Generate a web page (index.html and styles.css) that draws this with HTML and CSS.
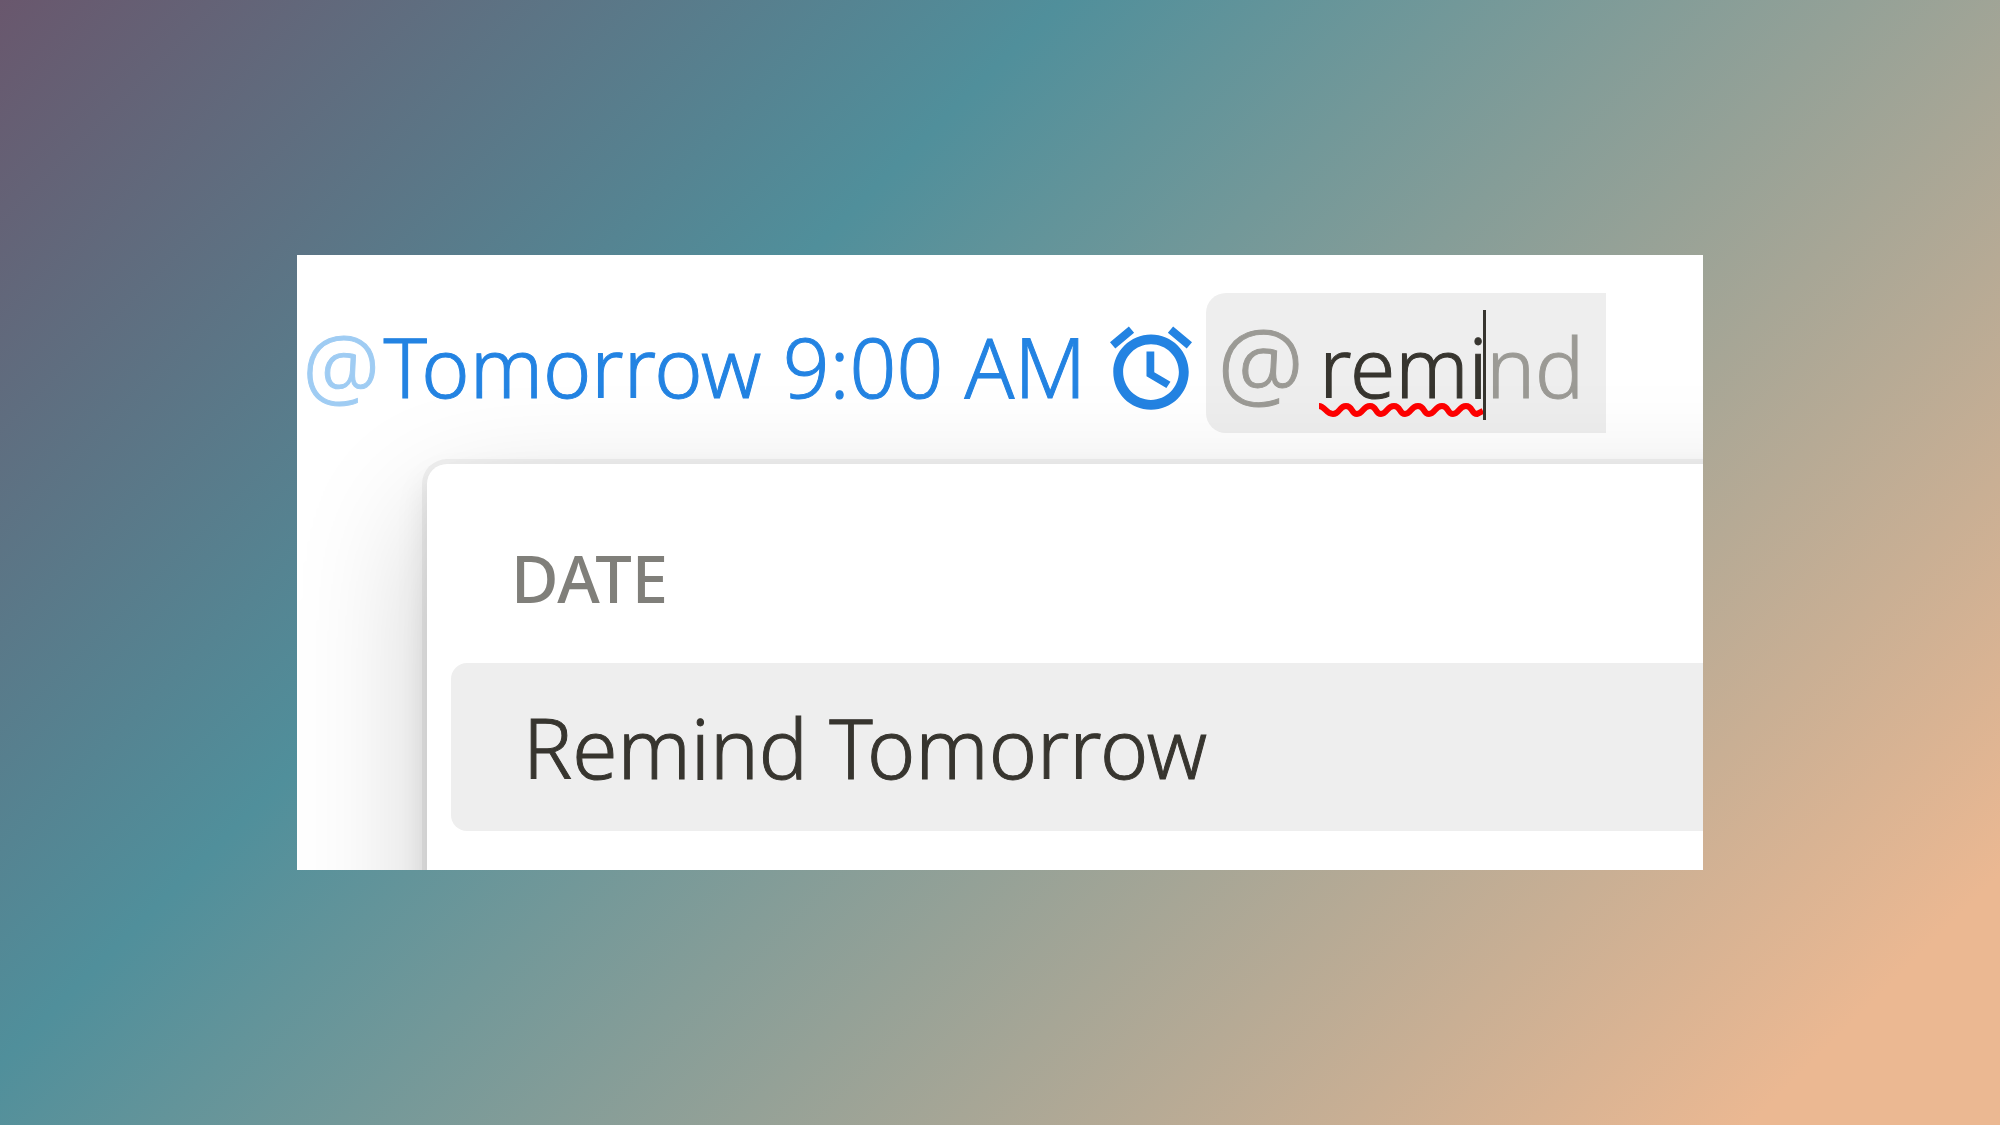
FILE: index.html
```html
<!DOCTYPE html>
<html lang="en">
<head>
<meta charset="utf-8">
<meta name="viewport" content="width=device-width, initial-scale=1">
<title>Reminder mention</title>
<link rel="stylesheet" href="styles.css">
</head>
<body>
<main class="card">
  <div class="line">
    <a class="mention" href="#reminder"><span class="mention-at">@</span><span>Tomorrow 9:00 AM</span>
      <svg class="alarm" viewBox="2 2 20 20" aria-hidden="true">
        <path d="M22 5.72l-4.6-3.86-1.29 1.53 4.6 3.86L22 5.72zM7.88 3.39L6.6 1.86 2 5.71l1.29 1.53 4.59-3.85zM12.8 8H10.9v6l4.85 2.85 1-1.5-3.95-2.3V8zM12 3.8c-5 0-9.2 4.1-9.2 9.2s4.1 9.2 9.2 9.2c5.1 0 9.2-4.1 9.2-9.2s-4.1-9.2-9.2-9.2zm0 16c-3.75 0-6.8-3.05-6.8-6.8s3.05-6.8 6.8-6.8 6.8 3.05 6.8 6.8-3.05 6.8-6.8 6.8z"/>
      </svg>
    </a>
    <div class="query">
      <label class="query-at" for="query">@</label>
      <span class="typed">
        <input id="query" class="query-input" type="text" value="remi" autocomplete="off" spellcheck="false">
        <svg class="squiggle" viewBox="0 0 164 14" aria-hidden="true">
          <path d="M0 3C6 3 7 11 14 11S20 3 27 3S32 11 38 11S44 3 51 3S56 11 62 11S68 3 75 3S80 11 86 11S92 3 99 3S104 11 110 11S116 3 123 3S128 11 134 11S140 3 147 3S152 11 158 11L164 8"/>
        </svg>
      </span>
      <span class="caret"></span>
      <span class="ghost">nd</span>
    </div>
  </div>
  <section class="menu" aria-labelledby="group-date">
    <h2 class="group" id="group-date">DATE</h2>
    <button class="option" type="button">Remind Tomorrow</button>
  </section>
</main>
</body>
</html>
```
FILE: styles.css
```css
* {
  box-sizing: border-box;
}

body {
  margin: 0;
  min-height: 100vh;
  display: flex;
  align-items: center;
  justify-content: center;
  background: linear-gradient(135deg, #69576d 0%, #508f9b 34%, #ebb892 92%);
  font-family: "Noto Sans", "Open Sans", sans-serif;
  font-size: 82px;
  font-weight: 300;
  line-height: 132px;
  color: #37352f;
  -webkit-text-stroke: 1px currentColor;
}

.card {
  width: 70.3%;
  overflow: hidden;
  background: #fff;
}

.line {
  display: flex;
  align-items: flex-start;
  gap: 14px;
  padding: 38px 0 0 6px;
  white-space: nowrap;
}

.mention {
  display: flex;
  align-items: baseline;
  height: 140px;
  padding-top: 6px;
  color: #2383e2;
  text-decoration: none;
}

.mention-at {
  margin-right: 4px;
  font-size: 86px;
  color: #9fccf3;
}

.alarm {
  align-self: flex-start;
  width: 82px;
  height: 82px;
  margin: 28px 0 0 24px;
  overflow: visible;
  fill: currentColor;
}

.query {
  display: flex;
  align-items: baseline;
  height: 140px;
  padding: 2px 22px 0 12px;
  border-radius: 20px 0 0 20px;
  background: #eee;
}

.query-at {
  margin-right: 16px;
  font-size: 96px;
  color: #9b9a95;
}

.typed {
  position: relative;
}

.query-input {
  display: block;
  width: 164px;
  height: 132px;
  padding: 0;
  border: 0;
  outline: 0;
  background: none;
  font: inherit;
  color: inherit;
  -webkit-text-stroke: inherit;
}

.squiggle {
  position: absolute;
  left: 0;
  bottom: 15px;
  width: 164px;
  height: 14px;
  fill: none;
  stroke: #f00;
  stroke-width: 6px;
}

.caret {
  align-self: flex-start;
  width: 3px;
  height: 110px;
  margin-top: 15px;
  background: #37352f;
}

.ghost {
  color: #9b9a95;
}

/* The menu runs past the right and bottom edges of the card, which clips it. */
.menu {
  position: relative;
  margin: 31px -160px -200px 130px;
  padding: 0 0 239px 24px;
  border-radius: 20px;
  background: #fff;
  box-shadow:
    0 0 0 5px rgba(15, 15, 15, 0.05),
    0 16px 33px rgba(15, 15, 15, 0.1),
    0 50px 132px rgba(15, 15, 15, 0.2);
}

.group {
  margin: 0;
  padding: 74px 0 45px 60px;
  font-size: 65px;
  font-weight: 500;
  line-height: 80px;
  color: #807f7a;
  -webkit-text-stroke: 0;
}

.option {
  display: block;
  width: 100%;
  height: 168px;
  padding: 0 0 0 72px;
  border: 0;
  border-radius: 16px;
  background: #eee;
  font: inherit;
  color: inherit;
  text-align: left;
  -webkit-text-stroke: inherit;
}
```
